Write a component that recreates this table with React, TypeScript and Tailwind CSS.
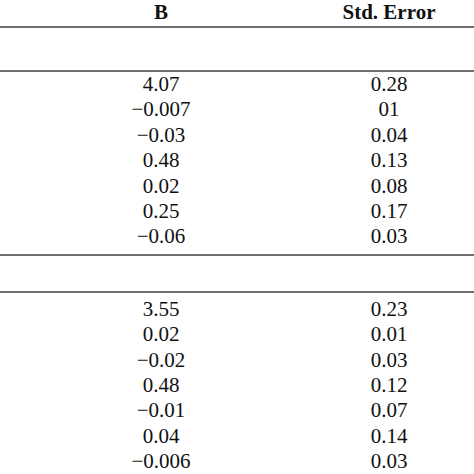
const groupA = [
  ["4.07", "0.28"],
  ["\u22120.007", "01"],
  ["\u22120.03", "0.04"],
  ["0.48", "0.13"],
  ["0.02", "0.08"],
  ["0.25", "0.17"],
  ["\u22120.06", "0.03"],
];

const groupB = [
  ["3.55", "0.23"],
  ["0.02", "0.01"],
  ["\u22120.02", "0.03"],
  ["0.48", "0.12"],
  ["\u22120.01", "0.07"],
  ["0.04", "0.14"],
  ["\u22120.006", "0.03"],
];

function Rule() {
  return <div className="h-[2px] w-full bg-[#707070]" />;
}

function Rows({ rows }: { rows: string[][] }) {
  return (
    <div className="flex flex-col">
      {rows.map(([b, se], i) => (
        <div key={i} className="grid grid-cols-[322px_134px] h-[25.4px] leading-[25.4px]">
          <span className="text-center">{b}</span>
          <span className="text-center">{se}</span>
        </div>
      ))}
    </div>
  );
}

export default function App() {
  return (
    <div
      className="w-[474px] h-[474px] overflow-hidden bg-white text-[21px] text-[#111]"
      style={{ fontFamily: '"Liberation Serif", "Times New Roman", serif' }}
    >
      {/* Header */}
      <div className="grid grid-cols-[322px_134px] h-[26px] leading-[24px] font-bold">
        <span className="text-center">B</span>
        <span className="text-center">Std. Error</span>
      </div>
      <Rule />
      <div className="h-[42px]" />
      <Rule />
      <Rows rows={groupA} />
      <div className="h-[4px]" />
      <Rule />
      <div className="h-[35px]" />
      <Rule />
      <div className="h-[4px]" />
      <Rows rows={groupB} />
    </div>
  );
}
